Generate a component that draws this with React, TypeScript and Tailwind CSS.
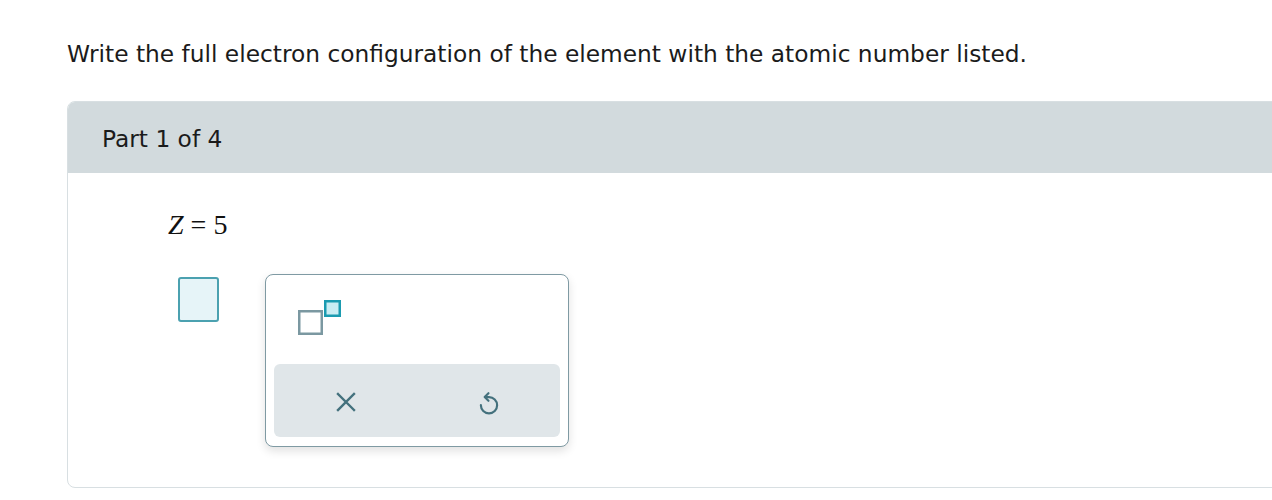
import React from 'react';

const SuperscriptIcon = () => (
  <svg width="44" height="36" viewBox="0 0 44 36" fill="none">
    <rect x="1.25" y="11.25" width="22.5" height="22.5" stroke="#7b98a1" strokeWidth="2.5" fill="#fff" />
    <rect x="27.25" y="1.25" width="14.5" height="14.5" stroke="#1b9bb0" strokeWidth="2.5" fill="#c9edf3" />
  </svg>
);

const ClearIcon = () => (
  <svg width="24" height="24" viewBox="0 0 24 24" fill="none" stroke="#44717d" strokeWidth="2.4" strokeLinecap="square">
    <path d="M4 4 L20 20 M20 4 L4 20" />
  </svg>
);

const UndoIcon = () => (
  <svg width="26" height="26" viewBox="0 0 24 24" fill="none" stroke="#44717d" strokeWidth="2" strokeLinecap="round" strokeLinejoin="round">
    <path d="M4.5 14 A7.5 7.5 0 1 0 12 6.5 H9" />
    <path d="M11.5 3 L8 6.5 L11.5 10" />
  </svg>
);

export default function App() {
  return (
    <div className="w-full overflow-hidden bg-white min-h-[500px]" style={{ fontFamily: '"DejaVu Sans", Verdana, sans-serif' }}>
      <div className="pl-[67px] pt-[39px]">
        <p className="text-[23.3px] leading-[30px] text-[#1b1b1b]">
          Write the full electron configuration of the element with the atomic number listed.
        </p>

        <div className="mt-[32px] w-[1260px] rounded-lg border border-[#d8dfe2] overflow-hidden">
          <div className="h-[71px] bg-[#d2dadd] flex items-center px-[34px] pt-[3px]">
            <span className="text-[23.3px] text-[#1b1b1b]">Part 1 of 4</span>
          </div>

          <div className="pl-[99px] pt-[37px] pb-[40px]">
            <div className="ml-[1px] text-[28px] leading-[30px] text-[#111]" style={{ fontFamily: '"Liberation Serif", "Times New Roman", serif' }}>
              <i>Z</i>
              <span className="mx-[7px]">=</span>
              <span>5</span>
            </div>

            <div className="mt-[34px] flex items-start">
              <div className="ml-[11px] mt-[3px] w-[41px] h-[45px] rounded-[3px] border-2 border-[#4ba1b0] bg-[#e6f4f8]" />

              <div className="ml-[46px] w-[304px] h-[173px] rounded-lg border border-[#7f9aa3] bg-white shadow-[0_4px_10px_rgba(0,0,0,0.12)] flex flex-col">
                <div className="h-[89px] pl-[32px] pt-[25px]">
                  <SuperscriptIcon />
                </div>
                <div className="mx-[8px] h-[73px] rounded-md bg-[#e0e6e9] flex">
                  <button className="flex-1 flex items-center justify-center pt-[2px]">
                    <ClearIcon />
                  </button>
                  <button className="flex-1 flex items-center justify-center pt-[4px]">
                    <UndoIcon />
                  </button>
                </div>
              </div>
            </div>
          </div>
        </div>
      </div>
    </div>
  );
}
